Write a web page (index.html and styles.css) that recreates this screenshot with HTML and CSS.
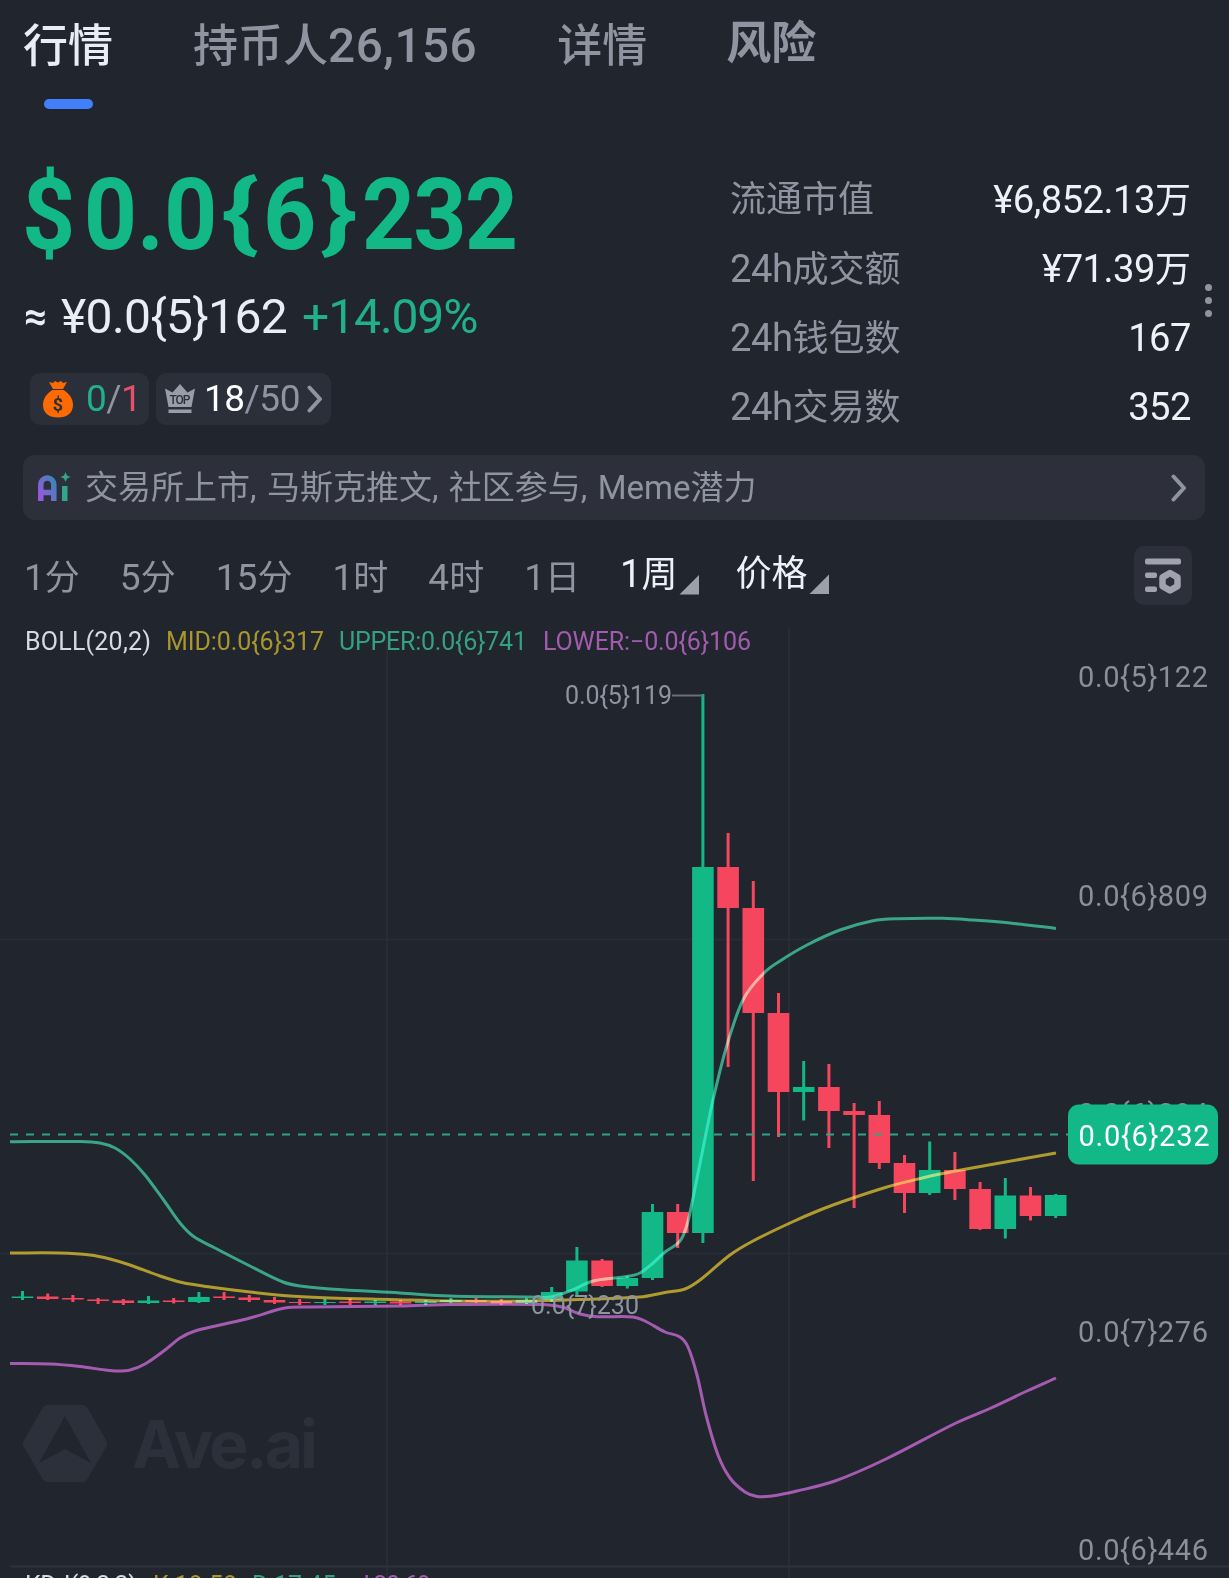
FILE: index.html
```html
<!DOCTYPE html>
<html lang="zh-cn">

<head>
  <meta charset="UTF-8">
  <meta name="viewport" content="width=device-width, initial-scale=1.0">
  <title>行情</title>
  <link rel="stylesheet" href="styles.css">
</head>

<body>
  <div class="container">
    <div class="tabs">
      <div class="tab tab-active">行情</div>
      <div class="tab">持币人<span class="num">26,156</span></div>
      <div class="tab">详情</div>
      <div class="tab tab-risk">风险</div>
    </div>

    <div class="overview">
      <div class="overview-left">
        <div class="price"><span class="dollar">$</span>0.0<span class="brace">{</span>6<span class="brace">}</span><span class="price-tail">232</span></div>
        <div class="approx">
          <span class="approx-sign">≈</span>
          <span class="approx-value">¥0.0{5}162</span>
          <span class="approx-change">+14.09%</span>
        </div>
        <div class="badges">
          <div class="badge badge-bag">
            <svg class="icon-bag" width="32" height="38" viewBox="0 0 32 38">
              <path fill="#ff6a00" d="M7 2l4 1 2-2 3 1.500 3-1.500 2 2 4-1-4 7H11z M10.500 10h11C28 14 31 19 31 25c0 8-6 12.500-15 12.500S1 33 1 25C1 19 4 14 10.500 10z" />
              <text x="16" y="31" text-anchor="middle" class="icon-bag-text">$</text>
            </svg>
            <span class="badge-text"><span class="green">0</span>/<span class="red">1</span></span>
          </div>
          <div class="badge badge-top">
            <svg class="icon-top" width="30" height="30" viewBox="0 0 30 30">
              <path fill="#9a9da7" d="M0 4.500l7.500 4L15 0l7.500 8.500 7.500-4L26.500 23h-23z M3.500 25.500h23v3.500h-23z" />
              <text x="4.500" y="19.500" textLength="21" class="icon-top-text">TOP</text>
            </svg>
            <span class="badge-text"><span class="white">18</span>/50</span>
            <svg class="icon-arrow" width="16" height="28" viewBox="0 0 16 28">
              <path d="M2.500 2.500L13 14 2.500 25.500" />
            </svg>
          </div>
        </div>
      </div>
      <div class="stats">
        <div class="stat"><span>流通市值</span><b><span class="num">¥6,852.13</span>万</b></div>
        <div class="stat"><span><span class="num">24h</span>成交额</span><b><span class="num">¥71.39</span>万</b></div>
        <div class="stat"><span><span class="num">24h</span>钱包数</span><b><span class="num">167</span></b></div>
        <div class="stat"><span><span class="num">24h</span>交易数</span><b><span class="num">352</span></b></div>
      </div>
      <div class="more"><i></i><i></i><i></i></div>
    </div>

    <div class="ai-bar">
      <svg class="icon-ai" width="34" height="32" viewBox="0 0 34 32">
        <defs>
          <linearGradient id="ai" x1="0" y1="1" x2="1" y2="0">
            <stop offset="0" stop-color="#9d55e0" />
            <stop offset="1" stop-color="#3c86b8" />
          </linearGradient>
        </defs>
        <path fill="none" stroke="url(#ai)" stroke-width="5.500" d="M2.800 29V12.500a6.500 6.500 0 0 1 13 0V29 M3 20.500h12.500" />
        <path fill="#33a58f" d="M24 14h5.500v15H24z M27.500 0l1.500 3.500 3.500 1.500-3.500 1.500-1.500 3.500-1.500-3.500L22.500 5l3.500-1.500z" />
      </svg>
      <span class="ai-text">交易所上市, 马斯克推文, 社区参与, Meme潜力</span>
      <svg class="icon-arrow" width="16" height="28" viewBox="0 0 16 28">
        <path d="M2.500 2.500L13 14 2.500 25.500" />
      </svg>
    </div>

    <div class="periods">
      <div class="period"><span class="num">1</span>分</div>
      <div class="period"><span class="num">5</span>分</div>
      <div class="period"><span class="num">15</span>分</div>
      <div class="period"><span class="num">1</span>时</div>
      <div class="period"><span class="num">4</span>时</div>
      <div class="period"><span class="num">1</span>日</div>
      <div class="period period-active"><span class="num">1</span>周</div>
      <div class="period period-active">价格</div>
      <div class="setting">
        <svg width="36" height="36" viewBox="0 0 36 36">
          <g fill="#a0a3ad">
            <rect x="0" y="0.500" width="36" height="6" rx="2" />
            <rect x="0" y="14.500" width="12" height="5.500" rx="2" />
            <rect x="0" y="28.500" width="12" height="5.500" rx="2" />
          </g>
          <path d="M25 15l7.500 4.400v8.700L25 32.500l-7.500-4.400v-8.700z" fill="none" stroke="#a0a3ad" stroke-width="6.500" stroke-linejoin="round" />
        </svg>
      </div>
    </div>

    <svg class="chart" width="1229" height="958" viewBox="0 620 1229 958">
      <g class="grid">
        <path d="M387 628V1578 M789 628V1578 M0 939.500H1229 M0 1253.500H1229" />
        <path class="grid-split" d="M10 1566.500H1229" />
      </g>
      <g class="watermark">
        <path fill-rule="evenodd" d="M48 1405h34q4 0 6 4l18 31q2 3.500 0 7l-18 31q-2 4-6 4h-34q-4 0-6-4l-18-31q-2-3.500 0-7l18-31q2-4 6-4z M65 1416l-26 47 26-14 26 14z" />
        <text x="132" y="1468" textLength="186">Ave.ai</text>
      </g>
      <g class="legend">
        <text x="25" y="650" textLength="126" fill="#d6dae4">BOLL(20,2)</text>
        <text x="166" y="650" textLength="158" fill="#a9962d">MID:0.0{6}317</text>
        <text x="339" y="650" textLength="188" fill="#36a083">UPPER:0.0{6}741</text>
        <text x="543" y="650" textLength="208" fill="#a35bae">LOWER:−0.0{6}106</text>
        <text x="25" y="1594" textLength="112" fill="#d6dae4">KDJ(9,3,3)</text>
        <text x="153" y="1594" textLength="84" fill="#a9962d">K:18.58</text>
        <text x="252" y="1594" textLength="84" fill="#36a083">D:17.45</text>
        <text x="356" y="1594" textLength="75" fill="#a35bae">J:20.69</text>
      </g>
      <g class="axis">
        <text x="1078" y="686.500" textLength="130">0.0{5}122</text>
        <text x="1078" y="906" textLength="130">0.0{6}809</text>
        <text x="1078" y="1124" textLength="130">0.0{6}394</text>
        <text x="1078" y="1342" textLength="130">0.0{7}276</text>
        <text x="1078" y="1560" textLength="130">0.0{6}446</text>
      </g>
      <g id="candles"></g>
      <path class="now-line" d="M10 1134.500H1068" />
      <g id="lines"></g>
      <g class="mark">
        <path d="M672 695.500H703" />
        <text x="565" y="704" textLength="107">0.0{5}119</text>
        <text x="531" y="1314" textLength="108">0.0{7}230</text>
      </g>
      <rect x="1068" y="1104.500" width="150" height="60" rx="11" fill="#12b886" />
      <text class="now-text" x="1078.500" y="1146" textLength="131">0.0{6}232</text>
    </svg>
  </div>
  <script src="chart.js"></script>
</body>

</html>
```

FILE: styles.css
```css
body {
  margin: 0;
  background: #20252e;
}

.container {
  width: 1229px;
  height: 1578px;
  overflow: hidden;
  background: #20252e;
  color: #9094a0;
  font-family: Roboto, "Noto Sans CJK SC", sans-serif;
}

.num {
  font-size: 1.06em;
}

.green {
  color: #22b08a;
}

.red {
  color: #e8506a;
}

.white {
  color: #fff;
}

/* tabs */
.tabs {
  display: flex;
  gap: 80px;
  height: 110px;
  padding-left: 23px;
  line-height: 93px;
  font-size: 45px;
  font-weight: 500;
  white-space: nowrap;
}

.tab {
  position: relative;
}

.tab .num {
  letter-spacing: .5px;
}

.tab-active {
  color: #e9edf8;
}

.tab-active::after {
  content: '';
  width: 49px;
  height: 10px;
  border-radius: 5px;
  background: #4080f8;
  position: absolute;
  bottom: 1px;
  left: 21px;
}

.tab-risk {
  margin-left: -1px;
  line-height: 88px;
  font-weight: 700;
}

/* price and stats */
.overview {
  display: flex;
  height: 290px;
  margin-top: 55px;
}

.overview-left {
  width: 730px;
  padding-left: 22px;
  box-sizing: border-box;
}

.price {
  height: 100px;
  line-height: 100px;
  font-size: 100px;
  font-weight: 700;
  color: #12b886;
  white-space: nowrap;
  transform: scaleX(.93);
  transform-origin: left;
}

.dollar {
  margin-right: 9px;
}

.brace {
  display: inline-block;
  margin: 0 8px;
  transform: scale(1.25, .87) translateY(-3px);
}

.price-tail {
  letter-spacing: -2px;
}

.approx {
  display: flex;
  height: 56px;
  margin: 24px 0 0 2px;
  line-height: 56px;
  font-size: 48px;
}

.approx-sign {
  width: 37px;
  font-size: 40px;
  font-weight: 700;
  color: #e9edf8;
}

.approx-value {
  width: 241px;
  letter-spacing: -.6px;
  color: #e9edf8;
}

.approx-change {
  letter-spacing: -1.1px;
  color: #22b08a;
}

.badges {
  display: flex;
  gap: 7px;
  margin: 28px 0 0 8px;
}

.badge {
  display: flex;
  align-items: center;
  height: 52px;
  border-radius: 10px;
  background: #2b2f3a;
  box-sizing: border-box;
}

.badge-bag {
  width: 119px;
  padding-left: 12px;
}

.badge-top {
  width: 175px;
  padding-left: 9px;
}

.badge-text {
  font-size: 37px;
  line-height: 50px;
  letter-spacing: -.5px;
}

.icon-bag {
  margin-right: 12px;
}

.icon-bag-text {
  font-size: 18px;
  font-weight: 700;
  fill: #2b2f3a;
}

.icon-top {
  margin-right: 9px;
}

.icon-top-text {
  font-size: 12px;
  font-weight: 500;
  fill: #2b2f3a;
}

.icon-arrow path {
  fill: none;
  stroke: #9094a0;
  stroke-width: 4;
  stroke-linecap: round;
  stroke-linejoin: round;
}

.badge-top .icon-arrow {
  margin-left: 7px;
}

.stats {
  width: 461px;
}

.stat {
  display: flex;
  justify-content: space-between;
  height: 69px;
  line-height: 70px;
  font-size: 36px;
}

.stat .num {
  letter-spacing: -.5px;
}

.stat b {
  font-weight: 400;
  color: #eef1fb;
}

.more {
  display: flex;
  flex-direction: column;
  gap: 6px;
  margin: 119px 0 0 14px;
}

.more i {
  width: 7px;
  height: 7px;
  border-radius: 50%;
  background: #9094a0;
}

/* ai */
.ai-bar {
  display: flex;
  align-items: center;
  width: 1182px;
  height: 65px;
  margin-left: 23px;
  padding: 0 18px 0 15px;
  border-radius: 12px;
  background: #2d303b;
  box-sizing: border-box;
}

.ai-text {
  flex: 1;
  margin-left: 13px;
  padding-bottom: 5px;
  font-size: 33px;
  word-spacing: 2.2px;
}

/* periods */
.periods {
  display: flex;
  align-items: center;
  height: 100px;
  padding: 11px 37px 0 24px;
  font-size: 35px;
  box-sizing: border-box;
  white-space: nowrap;
}

.period {
  margin-right: 40px;
  padding-bottom: 3px;
}

.period-active {
  margin-right: 36px;
  color: #eef1fb;
  font-size: 36px;
  line-height: 50px;
}

.period-active::after {
  content: '';
  display: inline-block;
  width: 20px;
  height: 20px;
  margin-left: 2px;
  background: #9da0aa;
  clip-path: polygon(100% 0, 100% 100%, 0 100%);
  vertical-align: -8px;
}

.setting {
  display: flex;
  align-items: center;
  justify-content: center;
  width: 58px;
  height: 59px;
  margin-left: auto;
  border-radius: 10px;
  background: #2d303b;
}

/* chart */
.chart {
  display: block;
}

.grid {
  fill: none;
  stroke: #282c36;
  stroke-width: 2;
}

.grid-split {
  stroke: #2e323c;
}

.watermark {
  fill: #2c303b;
}

.watermark text {
  font-family: Inter, sans-serif;
  font-size: 66px;
  font-weight: 700;
}

.legend text,
.mark text {
  font-size: 25px;
}

.mark text {
  fill: #9094a0;
}

.mark path {
  stroke: #6b6f79;
  stroke-width: 2;
}

.axis text {
  font-size: 29px;
  fill: #8b8f9a;
}

.now-text {
  font-size: 29px;
  fill: #fff;
}

.now-line {
  fill: none;
  stroke: #34a287;
  stroke-width: 2;
  stroke-dasharray: 8 8;
}

.up {
  fill: #12b886;
}

.down {
  fill: #f6465d;
}

.line {
  fill: none;
  stroke-width: 3;
  mix-blend-mode: screen;
}

.line-upper {
  stroke: #1e966c;
}

.line-mid {
  stroke: #a58a00;
}

.line-lower {
  stroke: #98409f;
}
```

FILE: chart.js
```javascript
// [high, body top, body bottom, low, up]
var candles = [
  [1291, 1296.5, 1298, 1300, 1],
  [1293.5, 1296.5, 1299, 1300, 0],
  [1295, 1298, 1299.5, 1302, 0],
  [1298, 1299.5, 1301, 1304, 0],
  [1299, 1300.5, 1303, 1305, 0],
  [1296, 1300.5, 1303, 1304, 1],
  [1298, 1300.5, 1302, 1303.5, 0],
  [1292, 1297, 1302, 1303, 1],
  [1292, 1296.5, 1298, 1300, 0],
  [1295, 1297.5, 1300, 1302, 0],
  [1297, 1300, 1302.5, 1304, 0],
  [1299, 1302, 1303, 1305, 0],
  [1299, 1302, 1303, 1305, 1],
  [1298.5, 1301.5, 1303, 1305, 0],
  [1300, 1301.5, 1303, 1305, 1],
  [1300, 1301.5, 1303.5, 1305, 0],
  [1300, 1301.5, 1303, 1305, 1],
  [1298, 1300, 1302, 1303, 1],
  [1298, 1300, 1302, 1303, 0],
  [1299, 1301, 1303.5, 1305, 0],
  [1298, 1300, 1303, 1304, 1],
  [1287, 1292, 1299.5, 1302, 1],
  [1247, 1260.5, 1291.5, 1297, 1],
  [1259, 1260.5, 1286, 1287, 0],
  [1276, 1278, 1286, 1288.5, 1],
  [1204, 1212, 1278, 1280, 1],
  [1204, 1212, 1233, 1248, 0],
  [694, 867, 1233, 1243, 1],
  [833, 867, 908, 1067, 0],
  [881, 908, 1013, 1181, 0],
  [993, 1013, 1092, 1137, 0],
  [1061, 1087, 1092, 1120.5, 1],
  [1064, 1087, 1111, 1148, 0],
  [1103, 1111, 1115, 1208, 0],
  [1101, 1115, 1163, 1169, 0],
  [1155, 1163, 1193, 1213, 0],
  [1141.5, 1170, 1193, 1195, 1],
  [1152, 1170, 1189, 1200, 0],
  [1182, 1189, 1229, 1230, 0],
  [1178, 1195.5, 1229, 1238.5, 1],
  [1187, 1195.5, 1216, 1220.5, 0],
  [1194, 1195, 1216, 1218, 1]
];

var lines = {
  upper: [[10, 1141.7], [80, 1141.5], [100, 1143], [115, 1148], [130, 1159], [145, 1175], [165, 1202], [180, 1223], [193, 1236],
    [215, 1248], [250, 1266], [283, 1282], [300, 1286], [330, 1289], [400, 1293], [450, 1296], [530, 1297], [551, 1297],
    [570, 1291], [590, 1282], [605, 1279], [627, 1276.5], [640, 1273], [652, 1264], [665, 1252], [680, 1241], [687, 1225],
    [692.6, 1200], [702.7, 1150], [713, 1100], [727, 1045], [743, 1000], [764, 973], [780, 961], [807, 945], [840, 930],
    [873, 920.7], [897, 918.7], [943, 918.3], [973, 920], [1010, 923], [1056, 928.5]],
  mid: [[10, 1253], [60, 1253], [90, 1255], [110, 1259], [130, 1265], [160, 1276], [182, 1282.5], [210, 1287], [250, 1292],
    [290, 1296], [330, 1298], [390, 1299.5], [450, 1301], [530, 1301], [580, 1299.5], [640, 1297], [665, 1292.5],
    [685, 1289], [700, 1280], [730, 1255], [753, 1241], [790, 1223], [820, 1210], [850, 1199], [887, 1187], [910, 1181],
    [940, 1174], [1000, 1163], [1056, 1153]],
  lower: [[10, 1363.5], [50, 1364], [80, 1366.5], [105, 1370], [117, 1371], [130, 1370], [145, 1364], [165, 1350], [180, 1338],
    [195, 1331], [220, 1325], [250, 1318], [285, 1308], [310, 1307], [400, 1306], [450, 1304.5], [540, 1304.5],
    [562, 1307], [580, 1314], [597, 1316.7], [633, 1317], [645, 1321], [665, 1332], [680, 1337], [688, 1347], [697, 1375],
    [706, 1415], [718, 1455], [730, 1478], [745, 1492], [757, 1496.5], [772, 1496], [797, 1491], [835, 1481], [886, 1459],
    [956, 1423], [991, 1408], [1027, 1391], [1056, 1378]]
};

function rect(cls, x, y, w, h) {
  return '<rect class="' + cls + '" x="' + x + '" y="' + y + '" width="' + w + '" height="' + h + '"/>';
}

// smooth line through the points
function curve(p) {
  var d = 'M' + p[0];
  for (var i = 0; i < p.length - 1; i++) {
    var a = p[i - 1] || p[i], b = p[i], c = p[i + 1], e = p[i + 2] || c;
    var h = (c[0] - b[0]) / 3;
    var m1 = (c[1] - a[1]) / (c[0] - a[0]);
    var m2 = (e[1] - b[1]) / (e[0] - b[0]);
    d += 'C' + [b[0] + h, b[1] + m1 * h, c[0] - h, c[1] - m2 * h, c[0], c[1]];
  }
  return d;
}

var html = '';
candles.forEach(function (c, i) {
  var x = 22.5 + i * 25.2;
  var cls = c[4] ? 'up' : 'down';
  html += rect(cls, x - 1.5, c[0], 3, c[3] - c[0]);
  html += rect(cls, x - 10.8, c[1], 21.6, c[2] - c[1]);
});
document.getElementById('candles').innerHTML = html;

html = '';
for (var name in lines) {
  html += '<path class="line line-' + name + '" d="' + curve(lines[name]) + '"/>';
}
document.getElementById('lines').innerHTML = html;
```
